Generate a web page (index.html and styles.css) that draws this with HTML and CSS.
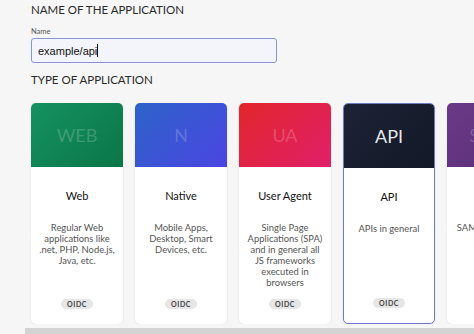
FILE: index.html
```html
<!DOCTYPE html>
<html lang="en">
<head>
    <meta charset="UTF-8">
    <title>Application type</title>
    <link rel="stylesheet" href="styles.css">
</head>
<body>
    <div class="page">
        <h2 class="section-title">NAME OF THE APPLICATION</h2>
        <label class="field-label" for="appName">Name</label>
        <div class="field-box">
            <span class="field-value">example/api</span><span class="caret"></span>
        </div>
        <h2 class="section-title second">TYPE OF APPLICATION</h2>
    </div>
    <div class="types-scroll">
        <div class="types">
            <div class="type-card">
                <div class="type-head web"><span>WEB</span></div>
                <div class="type-body">
                    <div class="type-name">Web</div>
                    <p class="type-desc">Regular Web applications like .net, PHP, Node.js, Java, etc.</p>
                    <span class="badge">OIDC</span>
                </div>
            </div>
            <div class="type-card">
                <div class="type-head native"><span>N</span></div>
                <div class="type-body">
                    <div class="type-name">Native</div>
                    <p class="type-desc">Mobile Apps, Desktop, Smart Devices, etc.</p>
                    <span class="badge">OIDC</span>
                </div>
            </div>
            <div class="type-card">
                <div class="type-head agent"><span>UA</span></div>
                <div class="type-body">
                    <div class="type-name">User Agent</div>
                    <p class="type-desc">Single Page Applications (SPA) and in general all JS frameworks executed in browsers</p>
                    <span class="badge">OIDC</span>
                </div>
            </div>
            <div class="type-card selected">
                <div class="type-head api"><span>API</span></div>
                <div class="type-body">
                    <div class="type-name">API</div>
                    <p class="type-desc">APIs in general</p>
                    <span class="badge">OIDC</span>
                </div>
            </div>
            <div class="type-card">
                <div class="type-head saml"><span>SAML</span></div>
                <div class="type-body">
                    <div class="type-name">SAML</div>
                    <p class="type-desc">SAML 2.0 Service Providers</p>
                    <span class="badge">SAML</span>
                </div>
            </div>
        </div>
        <div class="scrollbar"></div>
    </div>
</body>
</html>
```

FILE: styles.css
```css
body {
    margin: 0;
    background: #f6f6f6;
    font-family: Lato, "Open Sans", sans-serif;
    color: #222;
    height: 334px;
    overflow: hidden;
}
.page {
    padding: 2px 0 0 31px;
}
.section-title {
    margin: 0;
    font-size: 11.5px;
    font-weight: 400;
    color: #2a2a2a;
    line-height: 16px;
}
.section-title.second {
    margin-top: 9px;
}
.field-label {
    display: block;
    margin-top: 9px;
    font-size: 7.5px;
    color: #555;
    line-height: 10px;
}
.field-box {
    display: flex;
    align-items: center;
    width: 238px;
    height: 23px;
    margin-top: 1px;
    padding-left: 6px;
    background: #f4f5fb;
    border: 1px solid #8b92d6;
    border-radius: 3px;
    font-family: "Liberation Sans", Arial, sans-serif;
    font-size: 11px;
    color: #111;
}
.caret {
    display: inline-block;
    width: 1px;
    height: 13px;
    background: #111;
}
.types-scroll {
    margin: 15px 0 0 25px;
}
.types {
    display: flex;
    gap: 12px;
    padding: 0 6px;
    overflow: hidden;
}
.type-card {
    flex: 0 0 92px;
    height: 221px;
    box-sizing: border-box;
    background: #fff;
    border-radius: 5px;
    box-shadow: 0 1px 3px rgba(0, 0, 0, 0.08);
    display: flex;
    flex-direction: column;
    overflow: hidden;
}
.type-card.selected {
    border: 1px solid #7279c8;
}
.type-head {
    height: 64px;
    flex: 0 0 64px;
    display: flex;
    align-items: center;
    justify-content: center;
    font-size: 18px;
    color: rgba(255, 255, 255, 0.2);
}
.type-head.web {
    background: linear-gradient(135deg, #169160, #0a7648);
}
.type-head.native {
    background: linear-gradient(135deg, #2d63c9, #4b45e2);
}
.type-head.agent {
    background: linear-gradient(135deg, #e2262b, #e01f6a);
}
.type-head.api {
    background: linear-gradient(135deg, #1d2336, #131827);
    color: rgba(255, 255, 255, 0.92);
}
.type-head.saml {
    background: linear-gradient(135deg, #6b3a86, #582b78);
}
.type-body {
    flex: 1;
    display: flex;
    flex-direction: column;
    align-items: center;
    padding: 0 8px;
}
.type-name {
    margin-top: 22px;
    font-size: 11px;
    color: #111;
}
.type-desc {
    flex: 1;
    margin: 20px 0 0;
    font-size: 9.4px;
    line-height: 11px;
    text-align: center;
    color: #555;
}
.badge {
    margin-bottom: 15px;
    padding: 1px 6px;
    background: #e6e6e6;
    border-radius: 6px;
    font-size: 7px;
    font-weight: 700;
    letter-spacing: 0.6px;
    color: #444;
    line-height: 8px;
}
.scrollbar {
    height: 6px;
    margin-top: 4px;
    background: #d4d4d4;
}
```
